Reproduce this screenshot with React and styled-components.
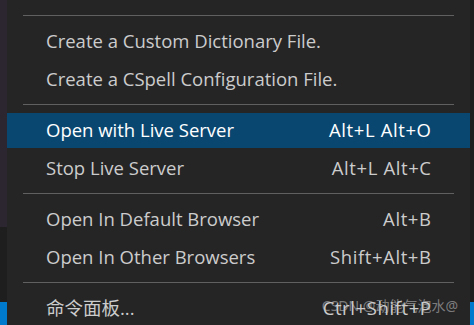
import React from 'react'
import styled, { createGlobalStyle } from 'styled-components'

const Global = createGlobalStyle`
  html, body { margin: 0; padding: 0; background: #1e1e1e; }
  body { width: 474px; height: 325px; overflow: hidden; }
`

const groups = [
  [{ label: '命令面板...', key: '' }],
  [
    { label: 'Create a Custom Dictionary File.', key: '' },
    { label: 'Create a CSpell Configuration File.', key: '' },
  ],
  [
    { label: 'Open with Live Server', key: 'Alt+L Alt+O', active: true },
    { label: 'Stop Live Server', key: 'Alt+L Alt+C' },
  ],
  [
    { label: 'Open In Default Browser', key: 'Alt+B' },
    { label: 'Open In Other Browsers', key: 'Shift+Alt+B' },
  ],
  [{ label: '命令面板...', key: 'Ctrl+Shift+P' }],
]

function App() {
  return (
    <>
      <Global />
      <Page>
        <LeftStrip>
          <Segment $bg="#2b2630" $h="227px" />
          <Segment $bg="#1e1e1e" $h="75px">
            <Glyph>i</Glyph>
          </Segment>
          <Segment $bg="#007acc" $h="23px" />
        </LeftStrip>
        <Menu>
          {groups.map((g, gi) => (
            <React.Fragment key={gi}>
              {gi > 0 && <Separator />}
              {g.map((item, i) => (
                <Row key={i} $active={item.active}>
                  <Label>{item.label}</Label>
                  <Key>{item.key}</Key>
                </Row>
              ))}
            </React.Fragment>
          ))}
        </Menu>
        <RightStrip>
          <Segment $bg="#1e1e1e" $h="302px" />
          <Segment $bg="#007acc" $h="23px" />
        </RightStrip>
        <Watermark>CSDN @动能气泡水@</Watermark>
      </Page>
    </>
  )
}

export default App

const Page = styled.div`
  position: relative;
  display: flex;
  width: 474px;
  height: 325px;
  overflow: hidden;
  font-family: 'Open Sans', 'Noto Sans', 'Noto Sans CJK SC', sans-serif;
`

const LeftStrip = styled.div`
  width: 7px;
  display: flex;
  flex-direction: column;
  flex-shrink: 0;
`

const RightStrip = styled(LeftStrip)`
  width: 4px;
`

const Segment = styled.div`
  height: ${(p) => p.$h};
  background: ${(p) => p.$bg};
  overflow: hidden;
  display: flex;
  align-items: center;
`

const Glyph = styled.span`
  color: #3794d8;
  font-size: 18px;
  margin-left: -4px;
`

const Menu = styled.div`
  flex: 1;
  background: #252526;
  display: flex;
  flex-direction: column;
  gap: 3px;
  margin-top: -27.5px;
`

const Row = styled.div`
  height: 35px;
  box-sizing: border-box;
  padding: 0 39px 2px 39px;
  flex-shrink: 0;
  display: flex;
  align-items: center;
  justify-content: space-between;
  font-size: 18.5px;
  color: ${(p) => (p.$active ? '#ffffff' : '#cccccc')};
  background: ${(p) => (p.$active ? '#094771' : 'transparent')};
`

const Label = styled.span`
  white-space: nowrap;
`

const Key = styled.span`
  white-space: nowrap;
  letter-spacing: 0.6px;
  margin-right: -0.6px;
`

const Separator = styled.div`
  height: 1px;
  flex-shrink: 0;
  margin: 4.5px 16px;
  background: #606060;
`

const Watermark = styled.div`
  position: absolute;
  right: 16px;
  bottom: 10px;
  font-size: 14px;
  color: rgba(200, 200, 200, 0.55);
  font-family: 'Noto Sans', 'Noto Sans CJK SC', sans-serif;
  white-space: nowrap;
`
